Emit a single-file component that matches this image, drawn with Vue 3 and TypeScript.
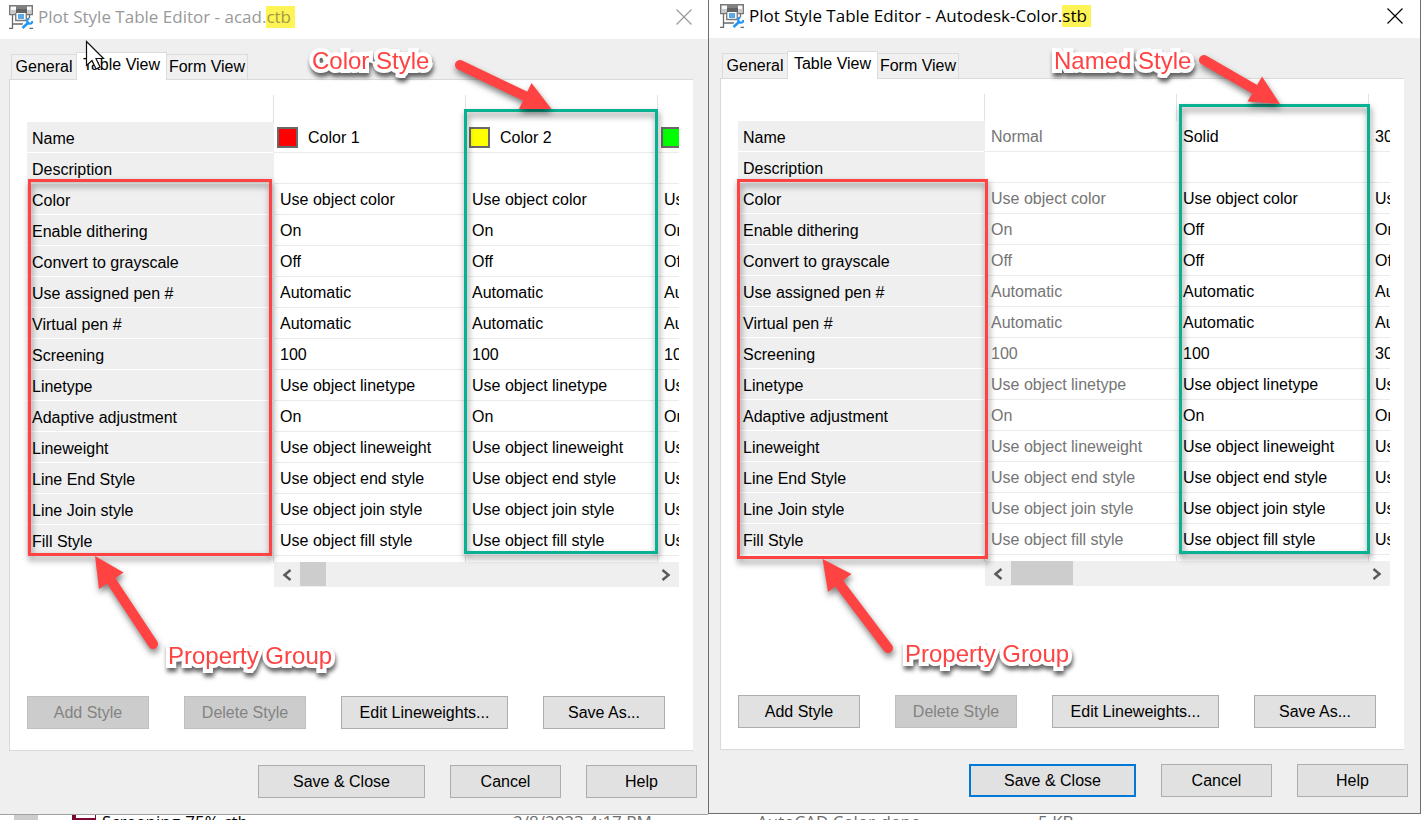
<script setup lang="ts">
interface Column {
  name: string
  swatch?: string
  muted?: boolean
  values: string[]
}

interface Action {
  label: string
  disabled?: boolean
  wide?: boolean
}

interface Box {
  x: number
  y: number
  w: number
  h: number
  color: string
}

interface Arrow {
  shaft: string
  head: string
}

interface Note {
  text: string
  cls: string
}

interface Dialog {
  id: string
  title: string
  ext: string
  columns: Column[]
  actions: Action[]
  boxes: Box[]
  arrows: Arrow[]
  notes: Note[]
}

const properties: string[] = [
  'Name',
  'Description',
  'Color',
  'Enable dithering',
  'Convert to grayscale',
  'Use assigned pen #',
  'Virtual pen #',
  'Screening',
  'Linetype',
  'Adaptive adjustment',
  'Lineweight',
  'Line End Style',
  'Line Join style',
  'Fill Style',
]

function valuesFor(dithering: string, screening: string): string[] {
  return [
    '',
    'Use object color',
    dithering,
    'Off',
    'Automatic',
    'Automatic',
    screening,
    'Use object linetype',
    'On',
    'Use object lineweight',
    'Use object end style',
    'Use object join style',
    'Use object fill style',
  ]
}

const RED = '#ff4343'
const GREEN = '#07b191'

const dialogs: Dialog[] = [
  {
    id: 'ctb',
    title: 'Plot Style Table Editor - acad.',
    ext: 'ctb',
    columns: [
      { name: 'Color 1', swatch: '#ff0000', values: valuesFor('On', '100') },
      { name: 'Color 2', swatch: '#ffff00', values: valuesFor('On', '100') },
      { name: 'Color 3', swatch: '#00ff00', values: valuesFor('On', '100') },
    ],
    actions: [
      { label: 'Add Style', disabled: true },
      { label: 'Delete Style', disabled: true },
      { label: 'Edit Lineweights...', wide: true },
      { label: 'Save As...' },
    ],
    boxes: [
      { x: 28, y: 179, w: 244, h: 377, color: RED },
      { x: 464, y: 109, w: 194, h: 445, color: GREEN },
    ],
    arrows: [
      { shaft: 'M460 65L527 97', head: '551.5,109 531.5,83 519,109' },
      { shaft: 'M153 644L110 579', head: '95,556 123.5,572.5 99,589' },
    ],
    notes: [
      { text: 'Color Style', cls: 'note-style' },
      { text: 'Property Group', cls: 'note-group' },
    ],
  },
  {
    id: 'stb',
    title: 'Plot Style Table Editor - Autodesk-Color.',
    ext: 'stb',
    columns: [
      { name: 'Normal', muted: true, values: valuesFor('On', '100') },
      { name: 'Solid', values: valuesFor('Off', '100') },
      { name: '30% Screen', values: valuesFor('On', '30') },
    ],
    actions: [
      { label: 'Add Style' },
      { label: 'Delete Style', disabled: true },
      { label: 'Edit Lineweights...', wide: true },
      { label: 'Save As...' },
    ],
    boxes: [
      { x: 28, y: 179, w: 251, h: 380, color: RED },
      { x: 470, y: 104, w: 191, h: 450, color: GREEN },
    ],
    arrows: [
      { shaft: 'M495 60L547 90', head: '571,104 553,76.5 538.5,101.5' },
      { shaft: 'M179 648L129 582', head: '113.5,559 142.5,574 119,592' },
    ],
    notes: [
      { text: 'Named Style', cls: 'note-style' },
      { text: 'Property Group', cls: 'note-group' },
    ],
  },
]
</script>

<template>
  <main class="screen">
    <div class="dialogs">
      <section v-for="d in dialogs" :key="d.id" class="dialog" :class="d.id">
        <header class="titlebar">
          <svg class="app-icon" width="24" height="24" viewBox="0 0 24 24" aria-hidden="true">
            <path d="M3.500 10V23.500M0 23.500H4M3.500 19H14M20.500 10V13M20.500 23.500H24" fill="none" stroke="#6a6a6a" stroke-width="1.300" />
            <rect x="0.750" y="0.750" width="22.500" height="8.750" fill="#fafafa" stroke="#777" stroke-width="1.500" />
            <path d="M1.500 5H7V9H1.500zM17 5H22.500V9H17z" fill="#c9c9c9" />
            <rect x="7" y="0" width="11" height="4" fill="#808080" />
            <rect x="7" y="4" width="11" height="4" fill="#626262" />
            <path d="M6.750 8V15.500H17.250V8" fill="#fff" stroke="#777" stroke-width="1.300" />
            <rect x="9" y="9" width="6" height="5" fill="#5aa9e6" />
            <path d="M13.500 23L19.500 17.500" stroke="#fff" stroke-width="4.500" />
            <path d="M13.500 23L20 17" stroke="#2196f3" stroke-width="2.500" />
            <path d="M20.500 13.500A2.600 2.600 0 1 0 23.300 16" fill="none" stroke="#2196f3" stroke-width="2" />
          </svg>
          <h1 class="title">{{ d.title }}<mark>{{ d.ext }}</mark></h1>
          <button class="close" type="button" aria-label="Close">
            <svg width="16" height="16" viewBox="0 0 16 16"><path d="M0.500 0.500L15.500 15.500M15.500 0.500L0.500 15.500" stroke="currentColor" stroke-width="1.200" /></svg>
          </button>
        </header>

        <nav class="tabs" role="tablist">
          <button type="button" role="tab" class="tab">General</button>
          <button type="button" role="tab" class="tab selected" aria-selected="true">Table View</button>
          <button type="button" role="tab" class="tab">Form View</button>
        </nav>

        <div class="panel">
          <div class="grid">
            <table>
              <colgroup>
                <col class="label-col" />
                <col v-for="c in d.columns" :key="c.name" class="value-col" />
              </colgroup>
              <tbody>
                <tr class="head">
                  <td></td>
                  <td v-for="c in d.columns" :key="c.name"></td>
                </tr>
                <tr v-for="(p, i) in properties" :key="p" class="row">
                  <th scope="row">{{ p }}</th>
                  <td v-for="c in d.columns" :key="c.name" :class="{ muted: c.muted, swatched: i === 0 && c.swatch }">
                    <span v-if="i === 0 && c.swatch" class="name"><i class="swatch" :style="{ background: c.swatch }"></i>{{ c.name }}</span>
                    <template v-else-if="i === 0">{{ c.name }}</template>
                    <template v-else>{{ c.values[i - 1] }}</template>
                  </td>
                </tr>
                <tr class="foot">
                  <td></td>
                  <td v-for="c in d.columns" :key="c.name"></td>
                </tr>
              </tbody>
            </table>
            <div class="scrollbar">
              <button type="button" aria-label="Scroll left">
                <svg width="10" height="12" viewBox="0 0 10 12"><path d="M8.500 1L2.500 6L8.500 11" /></svg>
              </button>
              <span class="thumb"></span>
              <button type="button" class="end" aria-label="Scroll right">
                <svg width="10" height="12" viewBox="0 0 10 12"><path d="M1.500 1L7.500 6L1.500 11" /></svg>
              </button>
            </div>
          </div>
          <div class="actions">
            <button v-for="a in d.actions" :key="a.label" type="button" class="btn" :class="{ wide: a.wide }" :disabled="a.disabled">{{ a.label }}</button>
          </div>
        </div>

        <footer class="footer">
          <button type="button" class="btn wide primary">Save &amp; Close</button>
          <button type="button" class="btn small">Cancel</button>
          <button type="button" class="btn small">Help</button>
        </footer>

        <svg class="overlay" aria-hidden="true">
          <g class="shadowed">
            <rect v-for="b in d.boxes" :key="b.color" :x="b.x + 1.5" :y="b.y + 1.5" :width="b.w - 3" :height="b.h - 3" fill="none" :stroke="b.color" stroke-width="3" />
          </g>
          <g class="shadowed">
            <g v-for="a in d.arrows" :key="a.shaft">
              <path :d="a.shaft" stroke="#ff4343" stroke-width="10" stroke-linecap="round" />
              <polygon :points="a.head" fill="#ff4343" />
            </g>
          </g>
          <path v-if="d.id === 'ctb'" d="M86.500 41.500V65.500L92 60.500L96 69L100 67L96 58.500H103.500Z" fill="#fff" stroke="#111" stroke-width="1.200" />
        </svg>
        <span v-for="n in d.notes" :key="n.text" class="note" :class="n.cls">{{ n.text }}</span>
      </section>
    </div>

    <div class="files">
      <div class="files-left">
        <span class="track"></span>
        <span class="file-icon"></span>
        <span class="file-name">Screening-75%.ctb</span>
        <span class="meta">2/8/2023 4:17 PM</span>
      </div>
      <div class="files-right">
        <span class="meta kind">AutoCAD Color-depe...</span>
        <span class="meta">5 KB</span>
      </div>
    </div>
  </main>
</template>

<style>
html,
body {
  overflow: hidden;
  background: #fff;
}
</style>

<style scoped>
.screen {
  height: 100vh;
  display: flex;
  flex-direction: column;
  overflow: hidden;
  font-family: 'Liberation Sans', Arial, sans-serif;
  font-size: 16px;
  color: #000;
}

.dialogs {
  display: grid;
  grid-template-columns: 708fr 713fr;
  align-items: start;
  flex: none;
}

.dialog {
  position: relative;
  min-width: 0;
  background: #efefef;
  border-bottom: 1px solid #a0a0a0;
}

.dialog.stb {
  border: solid #6e6e6e;
  border-width: 0 1px 1px;
}

.titlebar {
  display: flex;
  align-items: center;
  height: 39px;
  padding: 0 16px 6px 9px;
  box-sizing: border-box;
  background: #fff;
}

.stb .titlebar {
  height: 38px;
  padding: 0 17px 6px 11px;
}

.app-icon {
  flex: none;
  margin-right: 5px;
}

.title {
  margin: 0;
  flex: 1;
  white-space: nowrap;
  font: 400 17px/22px 'Open Sans', 'Noto Sans', sans-serif;
}

.ctb .title {
  color: #999;
}

.title mark {
  display: inline-block;
  padding-right: 4px;
  background: #fff455;
  color: inherit;
}

.ctb .title mark {
  color: #a09a45;
}

.close {
  display: flex;
  padding: 0;
  border: 0;
  background: none;
  color: #000;
}

.ctb .close {
  color: #999;
}

.tabs {
  display: flex;
  align-items: flex-end;
  height: 40px;
  margin: 0 15px 0 11px;
}

.stb .tabs {
  margin-left: 13px;
}

.tab {
  height: 25px;
  padding: 0;
  width: 66px;
  border: 1px solid #dcdcdc;
  border-bottom: 0;
  background: #f0f0f0;
  font: inherit;
  color: inherit;
}

.tab.selected {
  position: relative;
  z-index: 1;
  width: 91px;
  height: 28px;
  margin: 0 -1px -1px;
  padding-bottom: 3px;
  background: #fff;
}

.tab:last-child {
  width: 82px;
}

.panel {
  margin: 0 15px 0 9px;
  padding: 15px 14px 21px 17px;
  border: solid #dadada;
  border-width: 1px 0 1px 1px;
  background: #fff;
}

.stb .panel {
  margin: 0 16px 0 11px;
}

.grid {
  overflow: hidden;
}

table {
  width: 822px;
  table-layout: fixed;
  border-collapse: separate;
  border-spacing: 0;
}

.label-col {
  width: 246px;
}

.value-col {
  width: 192px;
}

td,
th {
  padding: 0;
  white-space: nowrap;
  text-align: left;
  font-weight: 400;
}

.head td {
  height: 27px;
}

.foot td {
  height: 6px;
}

.head td + td,
.foot td + td {
  border-left: 1px solid #e2e2e2;
}

.row th {
  height: 26px;
  padding: 4px 0 0 5px;
  line-height: 26px;
  background: #efefef;
  border-bottom: 1px solid #fff;
}

.row td {
  height: 28px;
  padding: 2px 0 0 6px;
  line-height: 28px;
  border-left: 1px solid #fff;
  border-bottom: 1px solid #ebebeb;
}

.row th + td {
  border-left-color: #efefef;
}

.row td.muted {
  color: #757575;
}

.row td.swatched {
  padding-left: 3px;
}

.name {
  display: flex;
  align-items: flex-start;
  gap: 10px;
}

.swatch {
  width: 17px;
  height: 17px;
  margin-top: 3px;
  border: 2px solid #696969;
}

.scrollbar {
  display: flex;
  height: 25px;
  margin-left: 247px;
  background: #efefef;
}

.scrollbar button {
  display: flex;
  align-items: center;
  justify-content: center;
  width: 26px;
  padding: 0;
  border: 0;
  background: none;
}

.scrollbar .end {
  margin-left: auto;
}

.scrollbar path {
  fill: none;
  stroke: #5a5a5a;
  stroke-width: 2.5px;
}

.thumb {
  width: 26px;
  height: 24px;
  background: #cdcdcd;
}

.stb .thumb {
  width: 62px;
}

.actions {
  display: flex;
  gap: 35px;
  margin-top: 109px;
}

.btn {
  width: 122px;
  height: 33px;
  padding: 0;
  border: 1px solid #adadad;
  background: #e1e1e1;
  font: inherit;
  color: #000;
}

.btn.wide {
  width: 167px;
}

.btn.small {
  width: 111px;
}

.btn:disabled {
  border-color: #bfbfbf;
  background: #cccccc;
  color: #838383;
}

.stb .btn.primary {
  border: 2px solid #0078d7;
}

.footer {
  display: flex;
  justify-content: flex-end;
  gap: 25px;
  padding: 14px 11px 16px;
}

.stb .footer {
  padding-right: 12px;
}

.overlay {
  position: absolute;
  inset: 0;
  width: 100%;
  height: 100%;
  z-index: 2;
  pointer-events: none;
}

.shadowed {
  filter: drop-shadow(1px 4px 3px rgba(0, 0, 0, 0.5));
}

.note {
  position: absolute;
  z-index: 3;
  font-size: 24px;
  line-height: 28px;
  color: #ff4343;
  white-space: nowrap;
  -webkit-text-stroke: 8px #fff;
  paint-order: stroke fill;
  stroke-linejoin: round;
  filter: drop-shadow(1px 4px 2px rgba(0, 0, 0, 0.6));
}

.ctb .note-style {
  left: 312px;
  top: 47px;
}

.ctb .note-group {
  left: 168px;
  top: 642px;
}

.stb .note-style {
  left: 345px;
  top: 47px;
}

.stb .note-group {
  left: 196px;
  top: 640px;
}

.files {
  display: grid;
  grid-template-columns: 708fr 713fr;
  flex: 1;
  min-height: 0;
  overflow: hidden;
  font: 17px/14px 'Open Sans', 'Noto Sans', sans-serif;
}

.files-left,
.files-right {
  display: flex;
  height: 14px;
  white-space: nowrap;
}

.track {
  width: 24px;
  margin: 0 34px 0 14px;
  background: #cdcdcd;
}

.file-icon {
  box-sizing: border-box;
  width: 24px;
  height: 5px;
  margin-right: 6px;
  border: solid #7a0a35;
  border-width: 0 1px 2px 4px;
}

.file-name {
  width: 411px;
}

.meta {
  color: #6d6d6d;
}

.kind {
  width: 281px;
  margin-left: 49px;
}
</style>
